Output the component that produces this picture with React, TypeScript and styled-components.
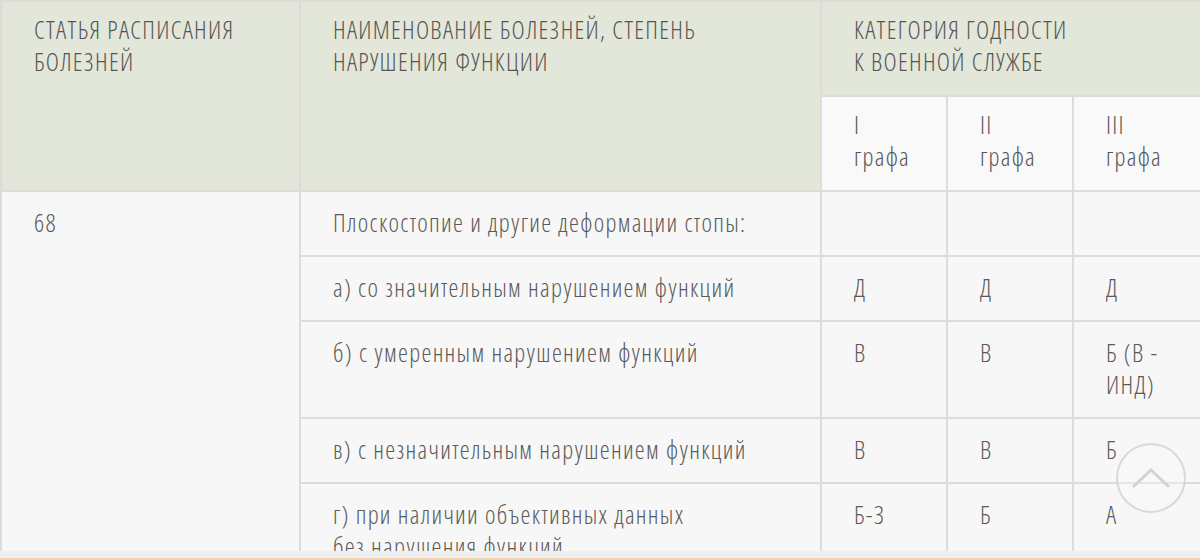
import React from 'react';
import styled, { createGlobalStyle } from 'styled-components';

const GlobalStyle = createGlobalStyle`
  html, body {
    margin: 0;
    padding: 0;
    height: 560px;
    overflow: hidden;
    background: #f7f7f7;
  }
  body {
    font-family: "Open Sans", "DejaVu Sans Condensed", sans-serif;
    font-stretch: 75%;
    font-weight: 300;
    color: #606060;
  }
`;

const Table = styled.table`
  border-collapse: collapse;
  table-layout: fixed;
  width: 1200px;
  font-size: 25px;
  line-height: 32px;
  letter-spacing: 1.3px;
  border: 2px solid #dcdcdc;
`;

const HeadCell = styled.th<{ $sub?: boolean }>`
  border: 2px solid #dcdcdc;
  background: ${(p) => (p.$sub ? '#f9f9f9' : '#e3e7da')};
  color: #555;
  font-weight: 300;
  text-align: left;
  vertical-align: top;
  text-transform: ${(p) => (p.$sub ? 'none' : 'uppercase')};
  padding: 11px 16px 18px 32px;
`;

const Cell = styled.td`
  border: 2px solid #dcdcdc;
  vertical-align: top;
  padding: 14px 16px 17px 32px;
  color: #5a5a5a;
`;

const ScrollTop = styled.button`
  position: fixed;
  right: 14px;
  bottom: 47px;
  width: 70px;
  height: 70px;
  border-radius: 50%;
  border: 2px solid rgba(205, 205, 205, 0.75);
  background: rgba(250, 250, 250, 0.35);
  display: flex;
  align-items: center;
  justify-content: center;
  padding: 0;
  cursor: pointer;
`;

const BottomBar = styled.div`
  position: fixed;
  left: 0;
  right: 0;
  bottom: 0;
  height: 7px;
  background: #efefef;
  border-bottom: 2px solid #f3d3b3;
`;

type Row = { name: React.ReactNode; g1: string; g2: string; g3: React.ReactNode };

const rows: Row[] = [
  { name: 'Плоскостопие и другие деформации стопы:', g1: '', g2: '', g3: '' },
  { name: 'а) со значительным нарушением функций', g1: 'Д', g2: 'Д', g3: 'Д' },
  { name: 'б) с умеренным нарушением функций', g1: 'В', g2: 'В', g3: <>Б (В -<br />ИНД)</> },
  { name: 'в) с незначительным нарушением функций', g1: 'В', g2: 'В', g3: 'Б' },
  {
    name: <>г) при наличии объективных данных<br />без нарушения функций</>,
    g1: 'Б-3',
    g2: 'Б',
    g3: 'А',
  },
];

const App = () => {
  return (
    <>
      <GlobalStyle />
      <Table>
        <colgroup>
          <col style={{ width: 299 }} />
          <col style={{ width: 521 }} />
          <col style={{ width: 126 }} />
          <col style={{ width: 126 }} />
          <col style={{ width: 128 }} />
        </colgroup>
        <thead>
          <tr>
            <HeadCell rowSpan={2}>Статья расписания<br />болезней</HeadCell>
            <HeadCell rowSpan={2}>Наименование болезней, степень<br />нарушения функции</HeadCell>
            <HeadCell colSpan={3}>Категория годности<br />к военной службе</HeadCell>
          </tr>
          <tr>
            <HeadCell $sub>I<br />графа</HeadCell>
            <HeadCell $sub>II<br />графа</HeadCell>
            <HeadCell $sub>III<br />графа</HeadCell>
          </tr>
        </thead>
        <tbody>
          {rows.map((r, i) => (
            <tr key={i}>
              {i === 0 && <Cell rowSpan={rows.length}>68</Cell>}
              <Cell>{r.name}</Cell>
              <Cell>{r.g1}</Cell>
              <Cell>{r.g2}</Cell>
              <Cell>{r.g3}</Cell>
            </tr>
          ))}
        </tbody>
      </Table>
      <ScrollTop aria-label="Наверх">
        <svg width="38" height="22" viewBox="0 0 38 22" fill="none" stroke="#d2d2d2" strokeWidth={3} strokeLinecap="round">
          <polyline points="2,19 19,3 36,19" />
        </svg>
      </ScrollTop>
      <BottomBar />
    </>
  );
};

export default App;
